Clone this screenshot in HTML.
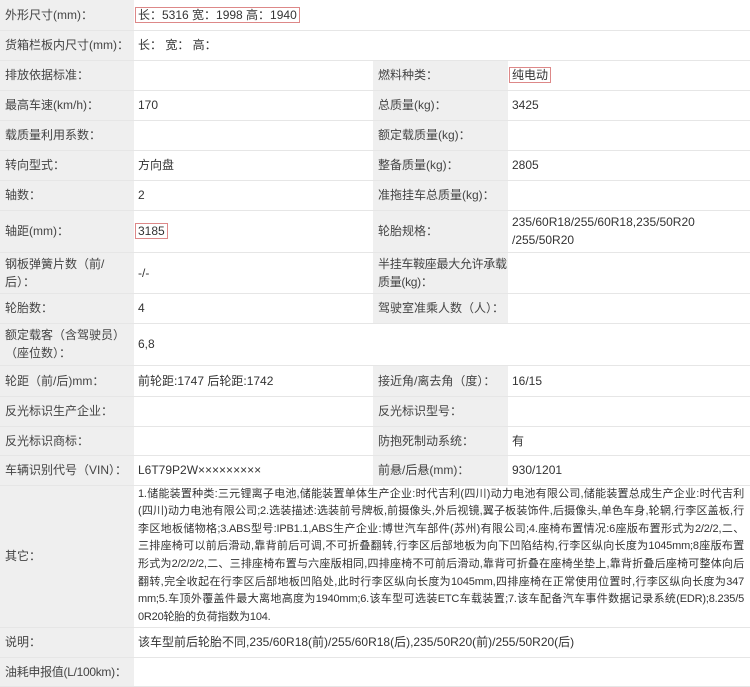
<!DOCTYPE html>
<html><head><meta charset="utf-8"><style>
*{margin:0;padding:0;box-sizing:border-box}
body{width:750px;height:686px;overflow:hidden;background:#fff;font-family:"Liberation Sans","Noto Sans CJK SC",sans-serif;font-size:12px;color:#333}
table{border-collapse:collapse;width:750px;table-layout:fixed}
td{border-bottom:1px solid #e6e6e6;padding:0 4px;vertical-align:middle;line-height:18px;overflow:hidden}
td.l{background:#efefef;color:#444;padding-left:5px;white-space:nowrap}
.box{border:1px solid #d88;padding:0 2px;margin-left:-3px}
.o div{width:606px;white-space:nowrap;text-align:justify;text-align-last:justify;line-height:17.6px;font-size:11px;letter-spacing:-0.2px}
.o div.last{text-align-last:left}
</style></head><body>
<table>
<colgroup><col style="width:134px"><col style="width:239px"><col style="width:135px"><col style="width:242px"></colgroup>
<tr style="height:30px"><td class="l">外形尺寸(mm)：</td><td colspan="3"><span class="box">长：5316 宽：1998 高：1940</span></td></tr>
<tr style="height:30px"><td class="l">货箱栏板内尺寸(mm)：</td><td colspan="3">长： 宽： 高：</td></tr>
<tr style="height:30px"><td class="l">排放依据标准：</td><td></td><td class="l">燃料种类：</td><td><span class="box">纯电动</span></td></tr>
<tr style="height:30px"><td class="l">最高车速(km/h)：</td><td>170</td><td class="l">总质量(kg)：</td><td>3425</td></tr>
<tr style="height:30px"><td class="l">载质量利用系数：</td><td></td><td class="l">额定载质量(kg)：</td><td></td></tr>
<tr style="height:30px"><td class="l">转向型式：</td><td>方向盘</td><td class="l">整备质量(kg)：</td><td>2805</td></tr>
<tr style="height:30px"><td class="l">轴数：</td><td>2</td><td class="l">准拖挂车总质量(kg)：</td><td></td></tr>
<tr style="height:42px"><td class="l">轴距(mm)：</td><td><span class="box">3185</span></td><td class="l">轮胎规格：</td><td>235/60R18/255/60R18,235/50R20<br>/255/50R20</td></tr>
<tr style="height:41px"><td class="l">钢板弹簧片数（前/<br>后）：</td><td>-/-</td><td class="l" style="letter-spacing:-0.3px">半挂车鞍座最大允许承载<br>质量(kg)：</td><td></td></tr>
<tr style="height:30px"><td class="l">轮胎数：</td><td>4</td><td class="l">驾驶室准乘人数（人）：</td><td></td></tr>
<tr style="height:42px"><td class="l">额定载客（含驾驶员）<br>（座位数）：</td><td colspan="3">6,8</td></tr>
<tr style="height:31px"><td class="l">轮距（前/后)mm：</td><td>前轮距:1747 后轮距:1742</td><td class="l">接近角/离去角（度）：</td><td>16/15</td></tr>
<tr style="height:30px"><td class="l">反光标识生产企业：</td><td></td><td class="l">反光标识型号：</td><td></td></tr>
<tr style="height:29px"><td class="l">反光标识商标：</td><td></td><td class="l">防抱死制动系统：</td><td>有</td></tr>
<tr style="height:30px"><td class="l">车辆识别代号（VIN）：</td><td>L6T79P2W×××××××××</td><td class="l">前悬/后悬(mm)：</td><td>930/1201</td></tr>
<tr style="height:142px"><td class="l">其它：</td><td colspan="3" class="o">
<div>1.储能装置种类:三元锂离子电池,储能装置单体生产企业:时代吉利(四川)动力电池有限公司,储能装置总成生产企业:时代吉利</div>
<div>(四川)动力电池有限公司;2.选装描述:选装前号牌板,前摄像头,外后视镜,翼子板装饰件,后摄像头,单色车身,轮辋,行李区盖板,行</div>
<div>李区地板储物格;3.ABS型号:IPB1.1,ABS生产企业:博世汽车部件(苏州)有限公司;4.座椅布置情况:6座版布置形式为2/2/2,二、</div>
<div>三排座椅可以前后滑动,靠背前后可调,不可折叠翻转,行李区后部地板为向下凹陷结构,行李区纵向长度为1045mm;8座版布置</div>
<div>形式为2/2/2/2,二、三排座椅布置与六座版相同,四排座椅不可前后滑动,靠背可折叠在座椅坐垫上,靠背折叠后座椅可整体向后</div>
<div>翻转,完全收起在行李区后部地板凹陷处,此时行李区纵向长度为1045mm,四排座椅在正常使用位置时,行李区纵向长度为347</div>
<div>mm;5.车顶外覆盖件最大离地高度为1940mm;6.该车型可选装ETC车载装置;7.该车配备汽车事件数据记录系统(EDR);8.235/5</div>
<div class="last">0R20轮胎的负荷指数为104.</div>
</td></tr>
<tr style="height:30px"><td class="l">说明：</td><td colspan="3">该车型前后轮胎不同,235/60R18(前)/255/60R18(后),235/50R20(前)/255/50R20(后)</td></tr>
<tr style="height:29px"><td class="l" style="letter-spacing:-0.3px">油耗申报值(L/100km)：</td><td colspan="3"></td></tr>
</table>
</body></html>
